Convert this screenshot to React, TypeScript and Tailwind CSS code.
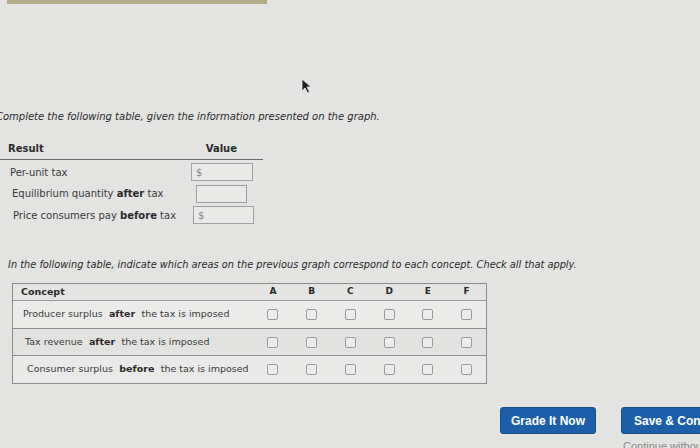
import React from 'react';

const letters = ['A', 'B', 'C', 'D', 'E', 'F'];

const concepts: { pre: string; bold: string; post: string; shade: string; pad: string; h: string }[] = [
  { pre: 'Producer surplus ', bold: 'after', post: ' the tax is imposed', shade: 'bg-[#ebebea]', pad: 'pl-[10px]', h: 'h-[28px]' },
  { pre: 'Tax revenue ', bold: 'after', post: ' the tax is imposed', shade: 'bg-[#e2e2e1]', pad: 'pl-[12px]', h: 'h-[27px]' },
  { pre: 'Consumer surplus ', bold: 'before', post: ' the tax is imposed', shade: 'bg-[#e9e9e8]', pad: 'pl-[14px]', h: 'h-[27px]' },
];

const Checkbox: React.FC = () => (
  <div className="w-[11px] h-[11px] rounded-[2px] border border-[#9a9a9a] bg-[#ececec]" />
);

const ValueBox: React.FC<{ dollar?: boolean; width: string }> = ({ dollar, width }) => (
  <div className={`${width} h-[18px] border border-[#a0a0a0] bg-[#e9e9e8] flex items-center pl-[4px] text-[10px] text-[#8a8a8a]`}>
    {dollar ? '$' : ''}
  </div>
);

const App: React.FC = () => {
  return (
    <div className="relative w-[700px] h-[448px] overflow-hidden bg-[#e3e3e2] text-[#3a3a3a] font-['DejaVu_Sans',sans-serif]">
      <div className="ml-[7px] w-[260px] h-[4px] bg-[#b3ae88]" />

      <svg className="absolute left-[301px] top-[78px]" width="12" height="16" viewBox="0 0 12 16">
        <path d="M1 1 L1 13 L4 10 L6.5 15 L8.5 14 L6 9 L10 9 Z" fill="#222" stroke="#eee" strokeWidth="0.8" />
      </svg>

      <p className="mt-[106px] -ml-[4px] text-[10px] italic leading-[14px] text-[#2a2a2a] whitespace-nowrap">
        Complete the following table, given the information presented on the graph.
      </p>

      <div className="mt-[17px] w-[263px] text-[10px]">
        <div className="flex items-end h-[19px] pb-[3px] border-b-[1.5px] border-[#6a6a6a]">
          <span className="pl-[8px] font-bold text-[#2a2a2a]">Result</span>
          <span className="ml-auto mr-[26px] font-bold text-[#2a2a2a]">Value</span>
        </div>
        <div className="flex items-center h-[22px] mt-[1px]">
          <span className="pl-[10px]">Per-unit tax</span>
          <div className="ml-auto mr-[10px]"><ValueBox dollar width="w-[62px]" /></div>
        </div>
        <div className="flex items-center h-[21px]">
          <span className="pl-[12px]">
            Equilibrium quantity <b className="text-[#2a2a2a]">after</b> tax
          </span>
          <div className="ml-auto mr-[16px]"><ValueBox width="w-[51px]" /></div>
        </div>
        <div className="flex items-center h-[22px]">
          <span className="pl-[13px]">
            Price consumers pay <b className="text-[#2a2a2a]">before</b> tax
          </span>
          <div className="ml-auto mr-[9px]"><ValueBox dollar width="w-[61px]" /></div>
        </div>
      </div>

      <p className="mt-[32px] ml-[8px] text-[9.8px] italic leading-[14px] text-[#2a2a2a] whitespace-nowrap">
        In the following table, indicate which areas on the previous graph correspond to each concept. Check all that apply.
      </p>

      <div className="mt-[11px] ml-[12px] w-[475px] border border-[#8c8c8c] text-[9.5px]">
        <div className="flex h-[17px] items-center bg-[#e4e4e3] border-b border-[#9a9a9a]">
          <span className="w-[242px] pl-[8px] font-bold text-[#2a2a2a]">Concept</span>
          {letters.map((l) => (
            <span key={l} className="w-[39px] text-center font-bold text-[#2a2a2a] text-[9px]">{l}</span>
          ))}
        </div>
        {concepts.map((c, i) => (
          <div
            key={i}
            className={`flex ${c.h} items-center ${c.shade} ${i < concepts.length - 1 ? 'border-b border-[#8f8f8f]' : ''}`}
          >
            <span className={`w-[242px] ${c.pad} whitespace-pre`}>
              {c.pre}
              <b className="text-[#2a2a2a]">{' ' + c.bold + ' '}</b>
              {c.post}
            </span>
            {letters.map((l) => (
              <div key={l} className="w-[39px] flex justify-center">
                <Checkbox />
              </div>
            ))}
          </div>
        ))}
      </div>

      <div className="mt-[23px] flex gap-[25px] pl-[500px]">
        <button className="w-[96px] h-[27px] shrink-0 rounded-[3px] bg-[#1c5fa8] text-white text-[12px] font-bold font-['Liberation_Sans',sans-serif] border border-[#174f8e]">
          Grade It Now
        </button>
        <div className="shrink-0">
          <button className="w-[100px] h-[27px] rounded-[3px] bg-[#1c5fa8] text-white text-[12px] font-bold font-['Liberation_Sans',sans-serif] border border-[#174f8e] text-left pl-[12px] whitespace-nowrap">
            Save &amp; Continue
          </button>
          <div className="mt-[4px] text-[11px] text-[#8a8a8a] font-['Liberation_Sans',sans-serif] whitespace-nowrap pl-[2px]">
            Continue without saving
          </div>
        </div>
      </div>
    </div>
  );
};

export default App;
